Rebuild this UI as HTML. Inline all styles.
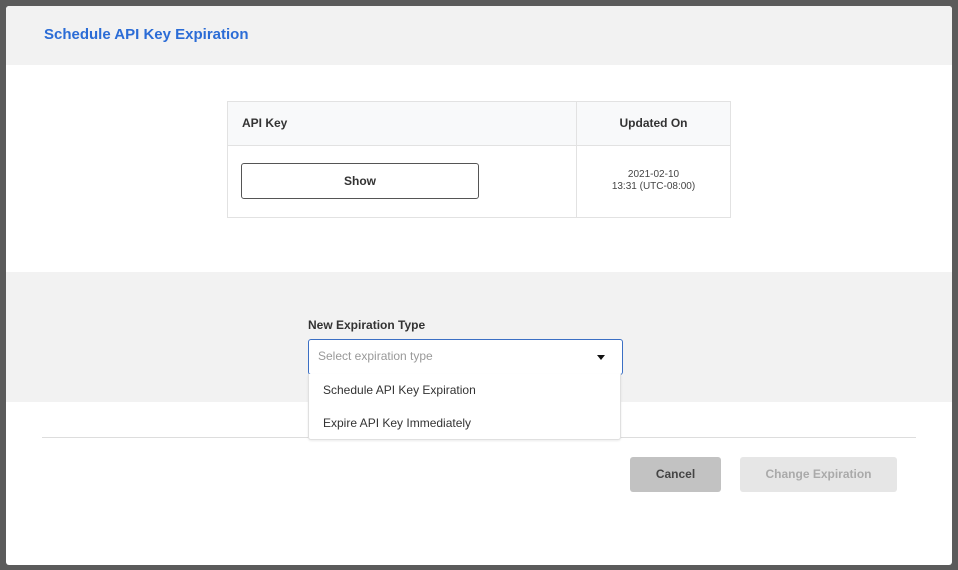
<!DOCTYPE html>
<html><head><style>
*{box-sizing:border-box;margin:0;padding:0}
body{width:958px;height:570px;background:#5b5b5b;font-family:"Liberation Sans",sans-serif;position:relative;overflow:hidden;color:#333}
.m{position:absolute;left:6px;top:6px;width:946px;height:559px;background:#fff;border-radius:3px;overflow:hidden}
.a{position:absolute}
</style></head><body>
<div class="m">
<div class="a" style="left:0;top:0;width:946px;height:59px;background:#f2f2f2"></div>
<div class="a" style="left:38px;top:20px;font-size:15px;font-weight:bold;color:#2b6cd6">Schedule API Key Expiration</div>
<div class="a" style="left:221px;top:95px;width:504px;height:117px;border:1px solid #e2e2e2"></div>
<div class="a" style="left:222px;top:96px;width:502px;height:44px;background:#f8f9fa;border-bottom:1px solid #e2e2e2"></div>
<div class="a" style="left:570px;top:96px;width:1px;height:115px;background:#e2e2e2"></div>
<div class="a" style="left:236px;top:110px;font-size:12px;font-weight:bold;color:#333">API Key</div>
<div class="a" style="left:571px;top:110px;width:153px;text-align:center;font-size:12px;font-weight:bold;color:#333">Updated On</div>
<div class="a" style="left:235px;top:157px;width:238px;height:36px;border:1px solid #555;border-radius:3px;text-align:center;line-height:34px;font-size:12px;font-weight:bold">Show</div>
<div class="a" style="left:571px;top:163px;width:153px;text-align:center;font-size:10px;line-height:12px;color:#444">2021-02-10<br>13:31 (UTC-08:00)</div>
<div class="a" style="left:0;top:266px;width:946px;height:130px;background:#f2f2f2"></div>
<div class="a" style="left:302px;top:312px;font-size:12px;font-weight:bold;color:#333">New Expiration Type</div>
<div class="a" style="left:302px;top:333px;width:315px;height:36px;background:#fff;border:1px solid #3b6fc4;border-radius:3px"></div>
<div class="a" style="left:312px;top:343px;font-size:12px;color:#999">Select expiration type</div>
<div class="a" style="left:591px;top:349px;width:0;height:0;border-left:4px solid transparent;border-right:4px solid transparent;border-top:5px solid #111"></div>
<div class="a" style="left:36px;top:431px;width:874px;height:1px;background:#ddd"></div>
<div class="a" style="left:302px;top:368px;width:313px;height:66px;background:#fff;border:1px solid #e0e0e0;border-top:none;border-radius:0 0 3px 3px;box-shadow:0 1px 2px rgba(0,0,0,.08)"></div>
<div class="a" style="left:317px;top:377px;font-size:12px;color:#333">Schedule API Key Expiration</div>
<div class="a" style="left:317px;top:410px;font-size:12px;color:#333">Expire API Key Immediately</div>
<div class="a" style="left:624px;top:451px;width:91px;height:35px;background:#c2c2c2;border-radius:3px;text-align:center;line-height:35px;font-size:12px;font-weight:bold;color:#444">Cancel</div>
<div class="a" style="left:734px;top:451px;width:157px;height:35px;background:#e6e6e6;border-radius:3px;text-align:center;line-height:35px;font-size:12px;font-weight:bold;color:#aaa">Change Expiration</div>
</div>
</body></html>
